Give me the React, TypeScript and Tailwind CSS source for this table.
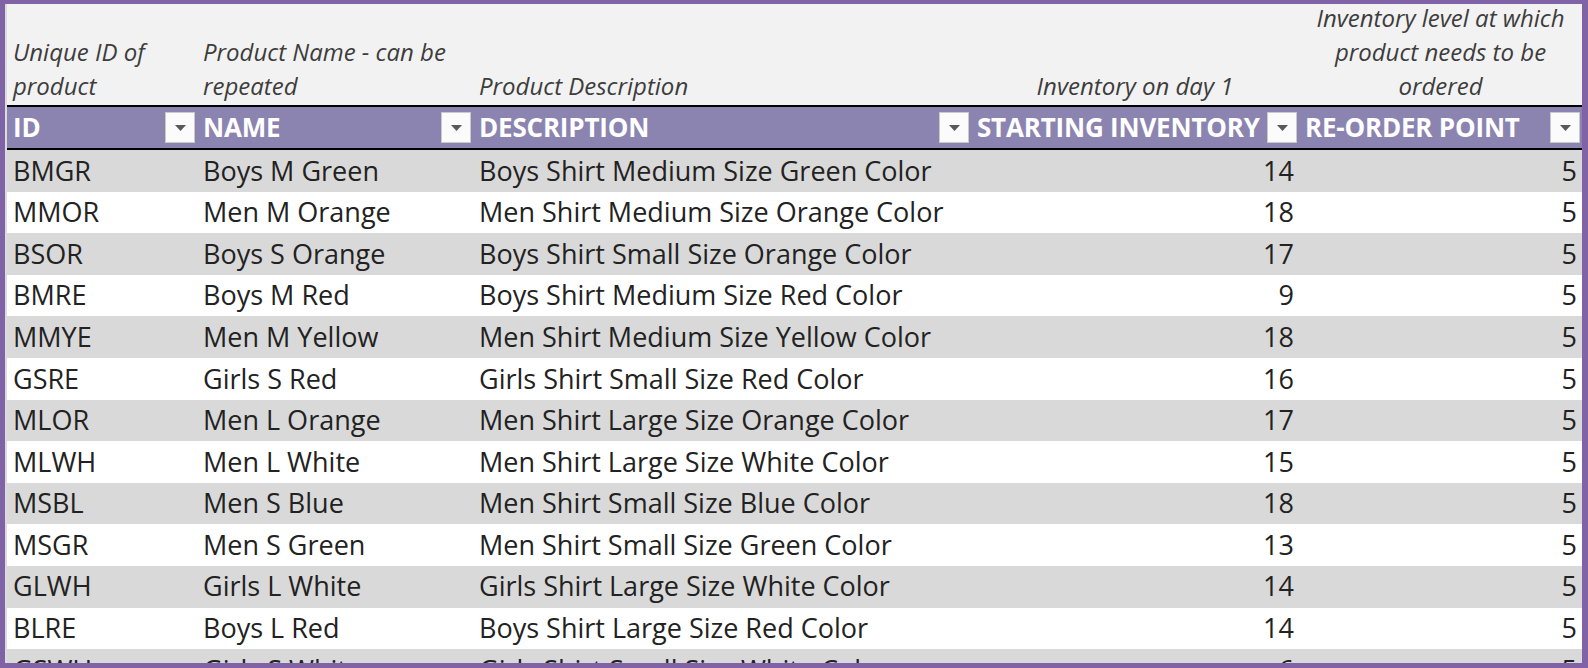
const rows: [string, string, string, number, number][] = [
  ["BMGR", "Boys M Green", "Boys Shirt Medium Size Green Color", 14, 5],
  ["MMOR", "Men M Orange", "Men Shirt Medium Size Orange Color", 18, 5],
  ["BSOR", "Boys S Orange", "Boys Shirt Small Size Orange Color", 17, 5],
  ["BMRE", "Boys M Red", "Boys Shirt Medium Size Red Color", 9, 5],
  ["MMYE", "Men M Yellow", "Men Shirt Medium Size Yellow Color", 18, 5],
  ["GSRE", "Girls S Red", "Girls Shirt Small Size Red Color", 16, 5],
  ["MLOR", "Men L Orange", "Men Shirt Large Size Orange Color", 17, 5],
  ["MLWH", "Men L White", "Men Shirt Large Size White Color", 15, 5],
  ["MSBL", "Men S Blue", "Men Shirt Small Size Blue Color", 18, 5],
  ["MSGR", "Men S Green", "Men Shirt Small Size Green Color", 13, 5],
  ["GLWH", "Girls L White", "Girls Shirt Large Size White Color", 14, 5],
  ["BLRE", "Boys L Red", "Boys Shirt Large Size Red Color", 14, 5],
  ["GSWH", "Girls S White", "Girls Shirt Small Size White Color", 6, 5],
];

const cols = "grid grid-cols-[190px_276px_498px_328px_283px]";

function FilterButton() {
  return (
    <div className="flex h-[31px] w-[30px] shrink-0 items-center justify-center border border-[#c9c9c9] bg-[#fbfbfb]">
      <svg width="11" height="6" viewBox="0 0 11 6">
        <path d="M0 0h11L5.5 6z" fill="#595959" />
      </svg>
    </div>
  );
}

function HeadCell({ label }: { label: string }) {
  return (
    <div className="flex items-center justify-between pl-[6px] pr-[2px]">
      <span className="whitespace-nowrap text-[26px] font-bold tracking-[-0.2px] text-white">
        {label}
      </span>
      <FilterButton />
    </div>
  );
}

export default function App() {
  return (
    <div className="h-[668px] w-[1588px] overflow-hidden border-t-[4px] border-r-[6px] border-b-[5px] border-l-[5px] border-[#7f63a6] bg-white font-['Open_Sans',sans-serif]">
      <div className="h-full overflow-hidden border-l-2 border-[#dcdcdc]">
        {/* notes above the table */}
        <div
          className={`${cols} h-[101px] grid-rows-[99px] bg-[#f2f2f2] text-[24px] italic leading-[34px] text-[#3d3d3d]`}
        >
          <div className="flex items-end pl-[6px]">
            <span>
              Unique ID of
              <br />
              product
            </span>
          </div>
          <div className="flex items-end pl-[6px]">
            <span>
              Product Name - can be
              <br />
              repeated
            </span>
          </div>
          <div className="flex items-end pl-[6px]">
            <span>Product Description</span>
          </div>
          <div className="flex items-end justify-center">
            <span>Inventory on day 1</span>
          </div>
          <div className="flex items-end justify-center text-center">
            <span>
              Inventory level at which
              <br />
              product needs to be
              <br />
              ordered
            </span>
          </div>
        </div>

        {/* header row */}
        <div className={`${cols} h-[45px] border-y-2 border-black bg-[#8c84b0]`}>
          <HeadCell label="ID" />
          <HeadCell label="NAME" />
          <HeadCell label="DESCRIPTION" />
          <HeadCell label="STARTING INVENTORY" />
          <HeadCell label="RE-ORDER POINT" />
        </div>

        {/* body */}
        {rows.map(([id, name, desc, start, reorder], i) => (
          <div
            key={id}
            className={`${cols} h-[41.6px] items-center text-[27px] text-[#222222] ${
              i % 2 === 0 ? "bg-[#d9d9d9]" : "bg-white"
            }`}
          >
            <div className="pl-[6px]">{id}</div>
            <div className="pl-[6px]">{name}</div>
            <div className="pl-[6px]">{desc}</div>
            <div className="pr-[5px] text-right">{start}</div>
            <div className="pr-[5px] text-right">{reorder}</div>
          </div>
        ))}
      </div>
    </div>
  );
}
